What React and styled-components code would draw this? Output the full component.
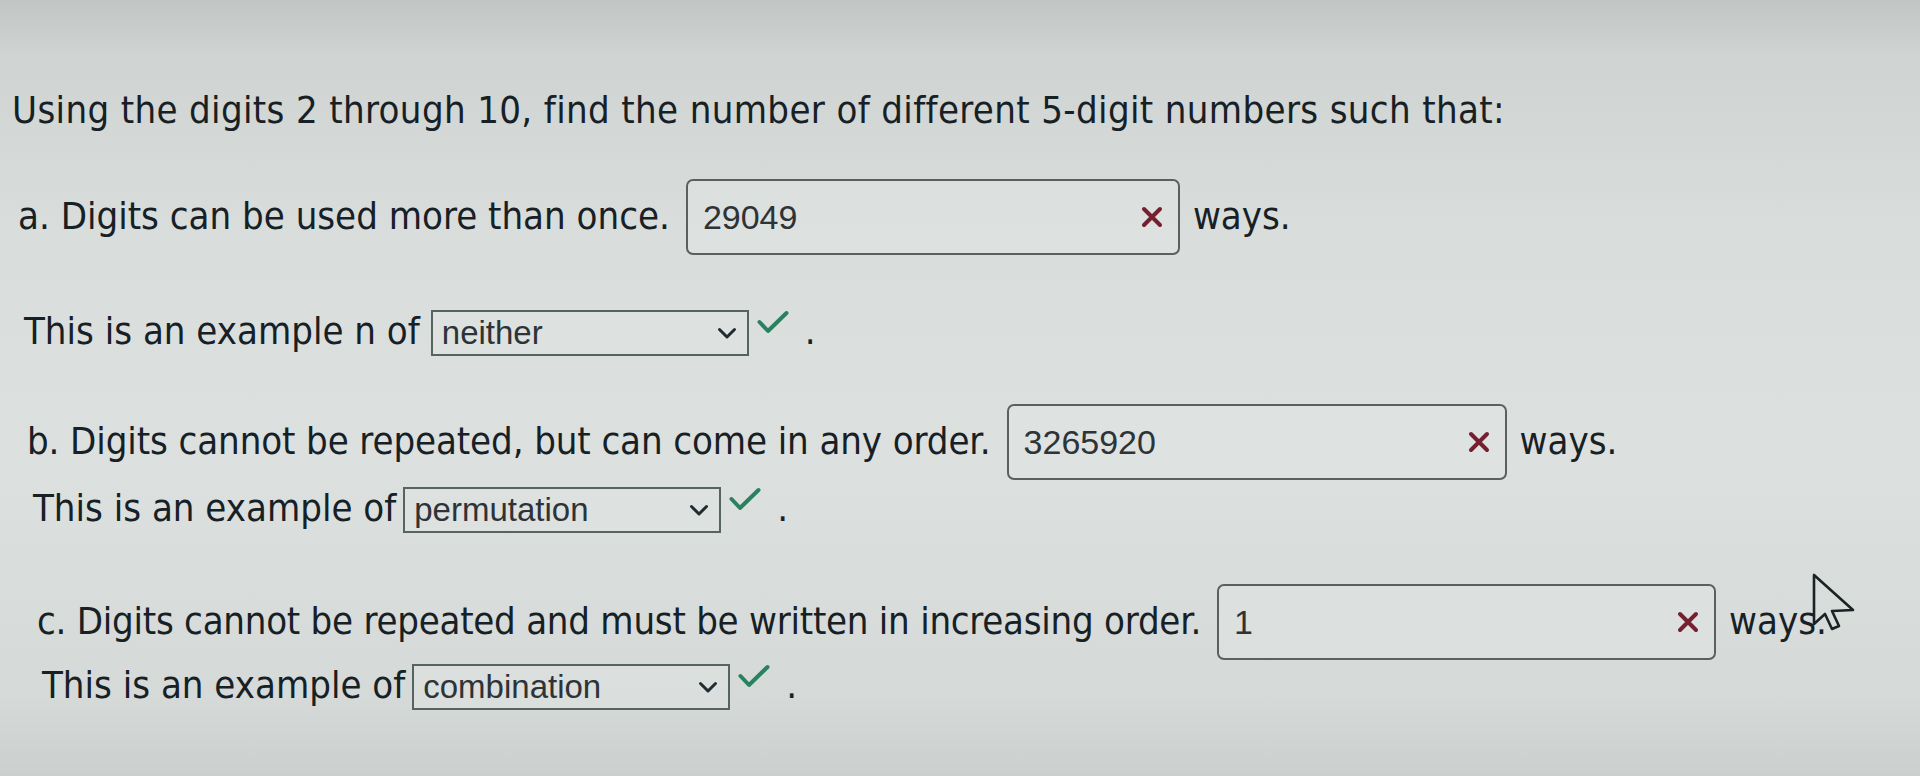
import React from "react";
import styled, { createGlobalStyle } from "styled-components";

const GlobalStyle = createGlobalStyle`
  html, body {
    margin: 0;
    padding: 0;
    width: 1920px;
    height: 776px;
    overflow: hidden;
  }
  body {
    background: #d5d9d7;
  }
`;

const Page = styled.div`
  position: relative;
  box-sizing: border-box;
  width: 1920px;
  height: 776px;
  padding-top: 87px;
  background: linear-gradient(
    180deg,
    #c1c5c4 0%,
    #cfd3d1 7%,
    #d9dddb 30%,
    #dce0de 60%,
    #d5d9d7 90%,
    #cbcfcd 100%
  );
  color: #162025;
  font-family: "DejaVu Sans Condensed", "DejaVu Sans", sans-serif;
  font-stretch: semi-condensed;
  font-size: 38px;
  line-height: 46px;
`;

const Heading = styled.div`
  padding-left: 12px;
  white-space: nowrap;
  letter-spacing: 0.35px;
`;

const Row = styled.div`
  display: flex;
  align-items: baseline;
  white-space: nowrap;
  padding-left: ${(p) => p.indent}px;
  margin-top: ${(p) => p.top}px;
`;

const Label = styled.span`
  margin-right: ${(p) => p.gap}px;
  letter-spacing: ${(p) => p.tracking || 0}px;
`;

const AnswerBox = styled.div`
  box-sizing: border-box;
  display: flex;
  align-items: center;
  justify-content: space-between;
  width: ${(p) => p.width}px;
  height: 76px;
  padding: 0 14px 0 15px;
  border: 2px solid #5b605f;
  border-radius: 7px;
  background: rgba(224, 228, 226, 0.55);
  font-family: "Liberation Sans", Arial, sans-serif;
  font-stretch: normal;
  font-size: 34px;
  color: #2d3337;
`;

const Wrong = styled.svg`
  width: 24px;
  height: 24px;
  flex: none;
`;

const Ways = styled.span`
  margin-left: 13px;
`;

const Dropdown = styled.div`
  box-sizing: border-box;
  display: flex;
  align-items: center;
  justify-content: space-between;
  width: 318px;
  height: 46px;
  padding: 0 10px 0 9px;
  border: 2px solid #56635e;
  background: rgba(224, 228, 226, 0.5);
  font-family: "Liberation Sans", Arial, sans-serif;
  font-stretch: normal;
  font-size: 33px;
  color: #2d3337;
`;

const Chevron = styled.svg`
  width: 20px;
  height: 13px;
  flex: none;
`;

const Check = styled.svg`
  align-self: flex-start;
  width: 32px;
  height: 25px;
  margin: 2px 0 0 8px;
  flex: none;
`;

const Dot = styled.span`
  margin-left: 16px;
`;

const Cursor = styled.svg`
  position: absolute;
  left: 1810px;
  top: 572px;
  width: 48px;
  height: 62px;
  pointer-events: none;
`;

const WrongMark = () => (
  <Wrong viewBox="0 0 24 24">
    <path
      d="M4 4 L20 20 M20 4 L4 20"
      stroke="#74202f"
      strokeWidth="4"
      strokeLinecap="round"
      fill="none"
    />
  </Wrong>
);

const Answer = ({ value, width }) => (
  <AnswerBox width={width}>
    <span>{value}</span>
    <WrongMark />
  </AnswerBox>
);

const Select = ({ value }) => (
  <Dropdown>
    <span>{value}</span>
    <Chevron viewBox="0 0 20 13">
      <path
        d="M2.5 2.5 L10 10 L17.5 2.5"
        stroke="#222b30"
        strokeWidth="3"
        strokeLinecap="round"
        strokeLinejoin="round"
        fill="none"
      />
    </Chevron>
  </Dropdown>
);

const CheckMark = () => (
  <Check viewBox="0 0 32 25">
    <path
      d="M2.5 12 L11 21 L29.5 3"
      stroke="#2a8160"
      strokeWidth="4"
      strokeLinecap="round"
      strokeLinejoin="round"
      fill="none"
    />
  </Check>
);

const ClassifyRow = ({ indent, top, label, value, gap }) => (
  <Row indent={indent} top={top}>
    <Label gap={gap}>{label}</Label>
    <Select value={value} />
    <CheckMark />
    <Dot>.</Dot>
  </Row>
);

const CountRow = ({ indent, top, label, value, tracking, width }) => (
  <Row indent={indent} top={top}>
    <Label gap={16} tracking={tracking}>
      {label}
    </Label>
    <Answer value={value} width={width} />
    <Ways>ways.</Ways>
  </Row>
);

export default function App() {
  return (
    <>
      <GlobalStyle />
      <Page>
        <Heading>
          Using the digits 2 through 10, find the number of different 5-digit
          numbers such that:
        </Heading>

        <CountRow
          indent={18}
          top={46}
          label="a. Digits can be used more than once."
          value="29049"
          width={494}
        />
        <ClassifyRow
          indent={24}
          top={53}
          gap={11}
          label="This is an example n of"
          value="neither"
        />

        <CountRow
          indent={27}
          top={48}
          label="b. Digits cannot be repeated, but can come in any order."
          value="3265920"
          tracking={-0.1}
          width={500}
        />
        <ClassifyRow
          indent={33}
          top={5}
          gap={7}
          label="This is an example of"
          value="permutation"
        />

        <CountRow
          indent={37}
          top={51}
          label="c. Digits cannot be repeated and must be written in increasing order."
          value="1"
          tracking={-0.25}
          width={499}
        />
        <ClassifyRow
          indent={42}
          top={2}
          gap={7}
          label="This is an example of"
          value="combination"
        />

        <Cursor viewBox="0 0 48 62">
          <path
            d="M4 3 L4 52 L15 42 L22 57 L29 54 L22 39 L43 38 Z"
            stroke="#1b2225"
            strokeWidth="2.6"
            strokeLinejoin="round"
            fill="none"
          />
        </Cursor>
      </Page>
    </>
  );
}
